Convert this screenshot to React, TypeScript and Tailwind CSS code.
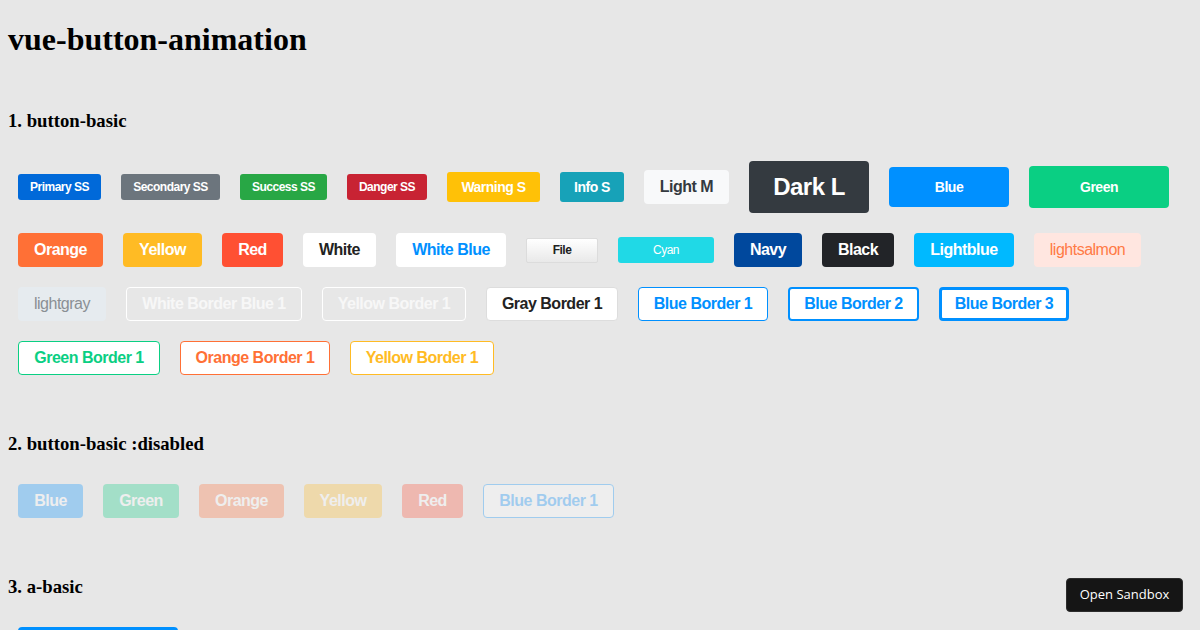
import React from "react";

type B = { label: string; cls: string };

const base =
  "m-[10px] flex shrink-0 items-center justify-center whitespace-nowrap tracking-[-0.5px] [font-family:'Liberation_Sans',Arial,sans-serif]";

const row: B[] = [
  { label: "Primary SS", cls: "w-[83px] h-[26px] rounded-[3px] bg-[#0069d9] text-white text-[12px] font-bold" },
  { label: "Secondary SS", cls: "w-[99px] h-[26px] rounded-[3px] bg-[#6c757d] text-white text-[12px] font-bold" },
  { label: "Success SS", cls: "w-[87px] h-[26px] rounded-[3px] bg-[#28a745] text-white text-[12px] font-bold" },
  { label: "Danger SS", cls: "w-[80px] h-[26px] rounded-[3px] bg-[#c82333] text-white text-[12px] font-bold" },
  { label: "Warning S", cls: "w-[93px] h-[30px] rounded-[3px] bg-[#ffc107] text-white text-[14px] font-bold" },
  { label: "Info S", cls: "w-[64px] h-[30px] rounded-[3px] bg-[#17a2b8] text-white text-[14px] font-bold" },
  { label: "Light M", cls: "w-[85px] h-[34px] rounded-[4px] bg-[#f8f9fa] text-[#343a40] text-[16px] font-bold" },
  { label: "Dark L", cls: "w-[120px] h-[52px] rounded-[4px] bg-[#343a40] text-white text-[24px] font-bold" },
  { label: "Blue", cls: "w-[120px] h-[40px] rounded-[4px] bg-[#0090ff] text-white text-[14px] font-bold" },
  { label: "Green", cls: "w-[140px] h-[42px] rounded-[4px] bg-[#0acf83] text-white text-[14px] font-bold" },

  { label: "Orange", cls: "w-[85px] h-[34px] rounded-[4px] bg-[#ff7036] text-white text-[16px] font-bold" },
  { label: "Yellow", cls: "w-[79px] h-[34px] rounded-[4px] bg-[#ffbb24] text-white text-[16px] font-bold" },
  { label: "Red", cls: "w-[61px] h-[34px] rounded-[4px] bg-[#ff5033] text-white text-[16px] font-bold" },
  { label: "White", cls: "w-[73px] h-[34px] rounded-[4px] bg-white text-[#222222] text-[16px] font-bold" },
  { label: "White Blue", cls: "w-[110px] h-[34px] rounded-[4px] bg-white text-[#0090ff] text-[16px] font-bold" },
  { label: "File", cls: "w-[72px] h-[25px] rounded-[2px] border border-[#dcdcdc] bg-gradient-to-b from-white to-[#e9e9e9] text-[#222222] text-[12px] font-bold" },
  { label: "Cyan", cls: "w-[96px] h-[26px] rounded-[3px] bg-[#20d9e6] text-white text-[12px] font-normal" },
  { label: "Navy", cls: "w-[68px] h-[34px] rounded-[4px] bg-[#00489d] text-white text-[16px] font-bold" },
  { label: "Black", cls: "w-[72px] h-[34px] rounded-[4px] bg-[#222428] text-white text-[16px] font-bold" },
  { label: "Lightblue", cls: "w-[100px] h-[34px] rounded-[4px] bg-[#00b9ff] text-white text-[16px] font-bold" },
  { label: "lightsalmon", cls: "w-[107px] h-[34px] rounded-[4px] bg-[#ffe6e0] text-[#ff7a45] text-[16px] font-normal" },

  { label: "lightgray", cls: "w-[88px] h-[34px] rounded-[4px] bg-[#e6ebef] text-[#8a8f94] text-[16px] font-normal" },
  { label: "White Border Blue 1", cls: "w-[176px] h-[34px] rounded-[4px] border border-white text-[#f7f7f7] text-[16px] font-bold" },
  { label: "Yellow Border 1", cls: "w-[144px] h-[34px] rounded-[4px] border border-white text-[#f7f7f7] text-[16px] font-bold" },
  { label: "Gray Border 1", cls: "w-[132px] h-[34px] rounded-[4px] border border-[#dddddd] bg-white text-[#222222] text-[16px] font-bold" },
  { label: "Blue Border 1", cls: "w-[130px] h-[34px] rounded-[4px] border border-[#0090ff] bg-white text-[#0090ff] text-[16px] font-bold" },
  { label: "Blue Border 2", cls: "w-[131px] h-[34px] rounded-[4px] border-2 border-[#0090ff] bg-white text-[#0090ff] text-[16px] font-bold" },
  { label: "Blue Border 3", cls: "w-[130px] h-[34px] rounded-[4px] border-[3px] border-[#0090ff] bg-white text-[#0090ff] text-[16px] font-bold" },

  { label: "Green Border 1", cls: "w-[142px] h-[34px] rounded-[4px] border border-[#0acf83] bg-white text-[#0acf83] text-[16px] font-bold" },
  { label: "Orange Border 1", cls: "w-[150px] h-[34px] rounded-[4px] border border-[#ff7036] bg-white text-[#ff7036] text-[16px] font-bold" },
  { label: "Yellow Border 1", cls: "w-[144px] h-[34px] rounded-[4px] border border-[#ffbb24] bg-white text-[#ffbb24] text-[16px] font-bold" },
];

const disabled: B[] = [
  { label: "Blue", cls: "w-[65px] h-[34px] rounded-[4px] bg-[#0090ff] text-white text-[16px] font-bold opacity-30" },
  { label: "Green", cls: "w-[76px] h-[34px] rounded-[4px] bg-[#0acf83] text-white text-[16px] font-bold opacity-30" },
  { label: "Orange", cls: "w-[85px] h-[34px] rounded-[4px] bg-[#ff7036] text-white text-[16px] font-bold opacity-30" },
  { label: "Yellow", cls: "w-[78px] h-[34px] rounded-[4px] bg-[#ffbb24] text-white text-[16px] font-bold opacity-30" },
  { label: "Red", cls: "w-[61px] h-[34px] rounded-[4px] bg-[#ff5033] text-white text-[16px] font-bold opacity-30" },
  { label: "Blue Border 1", cls: "w-[131px] h-[34px] rounded-[4px] border border-[#0090ff] bg-white text-[#0090ff] text-[16px] font-bold opacity-30" },
];

const h3 = "text-[18.72px] leading-[22px] font-bold text-black";

export default function App() {
  return (
    <div className="relative h-[630px] overflow-hidden bg-[#e7e7e7] px-2 pt-[21px] [font-family:'Liberation_Serif',serif]">
      <h1 className="text-[32px] leading-[37px] font-bold text-black">vue-button-animation</h1>

      <h3 className={`mt-[52px] ${h3}`}>1. button-basic</h3>
      <div className="mt-[19px] flex flex-wrap items-center">
        {row.map((b, i) => (
          <button key={i} className={`${base} ${b.cls}`}>
            {b.label}
          </button>
        ))}
      </div>

      <h3 className={`mt-[48px] ${h3}`}>2. button-basic :disabled</h3>
      <div className="mt-[19px] flex flex-wrap items-center">
        {disabled.map((b, i) => (
          <button key={i} disabled className={`${base} ${b.cls}`}>
            {b.label}
          </button>
        ))}
      </div>

      <h3 className={`mt-[48px] ${h3}`}>3. a-basic</h3>
      <div className="mt-[19px] flex flex-wrap items-center">
        <a className={`${base} w-[160px] h-[40px] rounded-[4px] bg-[#0090ff]`} aria-label="Blue" />
      </div>

      <button className="absolute right-[17px] bottom-[18px] flex h-[34px] w-[117px] items-center justify-center rounded-[4px] border border-[#2c2c2c] bg-[#151515] text-[13px] text-white [font-family:'Open_Sans',sans-serif]">
        Open Sandbox
      </button>
    </div>
  );
}
